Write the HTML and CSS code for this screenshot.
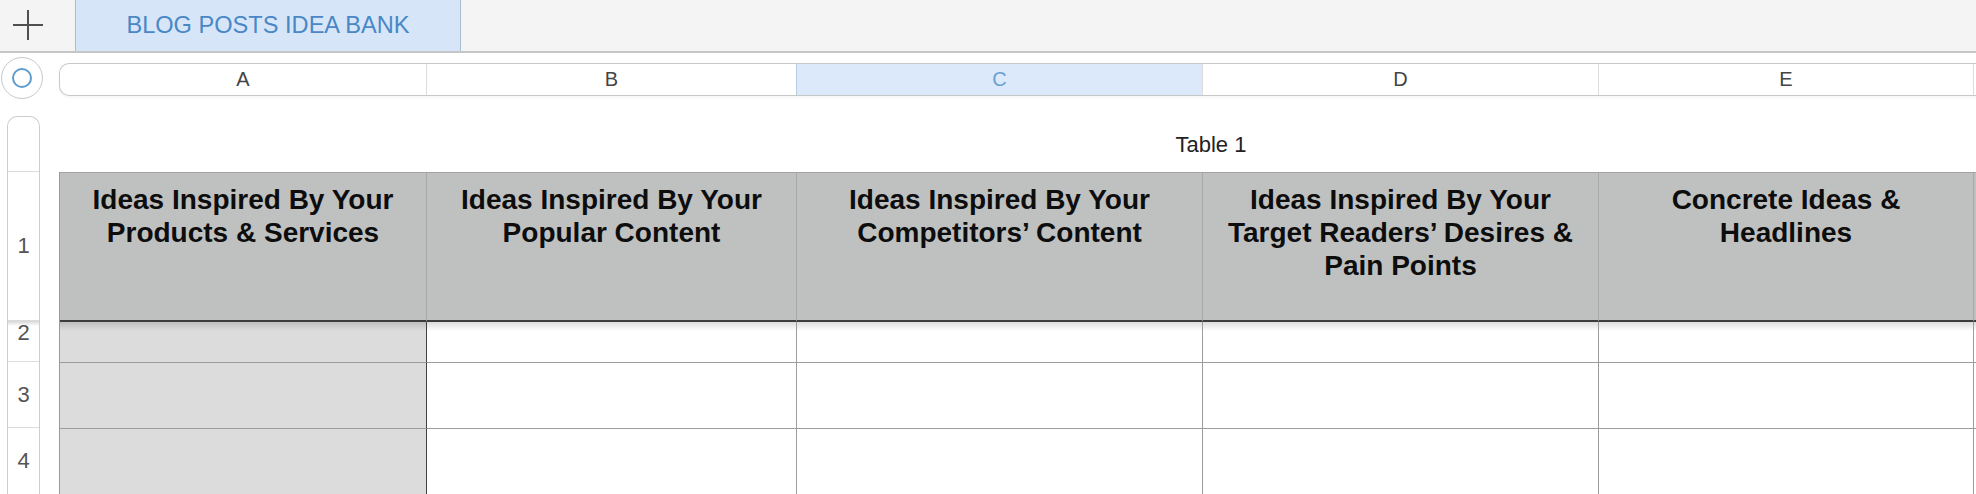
FILE: index.html
```html
<!DOCTYPE html>
<html lang="en">
<head>
<meta charset="utf-8">
<title>Blog Posts Idea Bank</title>
<link rel="stylesheet" href="styles.css">
</head>
<body>
<header class="tabbar">
  <button class="add-btn" aria-label="Add sheet">
    <svg width="32" height="32" viewBox="0 0 32 32"><path d="M16 1V31M1 16H31" stroke="#4f4f4f" stroke-width="2" fill="none"/></svg>
  </button>
  <div class="tab tab-active">BLOG POSTS IDEA BANK</div>
</header>

<div class="sheet">
  <div class="gutter">
    <div class="corner"><span class="circle-btn"><span class="circle-ring"></span></span></div>
    <div class="rowhead">
      <div class="rh rh-top"></div>
      <div class="rh rh-1">1</div>
      <div class="rh rh-2">2</div>
      <div class="rh rh-3">3</div>
      <div class="rh rh-4">4</div>
    </div>
  </div>

  <div class="content">
    <div class="colbar">
      <div class="ch">A</div>
      <div class="ch">B</div>
      <div class="ch ch-selected">C</div>
      <div class="ch">D</div>
      <div class="ch">E</div>
      <div class="ch"></div>
    </div>
    <div class="table-title">Table 1</div>
    <div class="table">
      <div class="hc">Ideas Inspired By Your Products &amp; Services</div>
      <div class="hc">Ideas Inspired By Your Popular Content</div>
      <div class="hc">Ideas Inspired By Your Competitors’ Content</div>
      <div class="hc">Ideas Inspired By Your Target Readers’ Desires &amp; Pain Points</div>
      <div class="hc">Concrete Ideas &amp; Headlines</div>
      <div class="hc"></div>

      <div class="bc r2 col-a"></div>
      <div class="bc r2"></div>
      <div class="bc r2"></div>
      <div class="bc r2"></div>
      <div class="bc r2"></div>
      <div class="bc r2"></div>

      <div class="bc r3 col-a"></div>
      <div class="bc r3"></div>
      <div class="bc r3"></div>
      <div class="bc r3"></div>
      <div class="bc r3"></div>
      <div class="bc r3"></div>

      <div class="bc r4 col-a"></div>
      <div class="bc r4"></div>
      <div class="bc r4"></div>
      <div class="bc r4"></div>
      <div class="bc r4"></div>
      <div class="bc r4"></div>
    </div>
  </div>
</div>
</body>
</html>
```

FILE: styles.css
```css
* { box-sizing: border-box; }

html, body {
  margin: 0;
  padding: 0;
}

body {
  width: 1976px;
  height: 494px;
  overflow: hidden;
  background: #ffffff;
  font-family: "Liberation Sans", Arial, Helvetica, sans-serif;
  color: #222;
}

/* ---------- Tab bar ---------- */
.tabbar {
  display: flex;
  height: 53px;
  background: #f4f4f4;
  border-bottom: 2px solid #c6c6c6;
}

.add-btn {
  width: 75px;
  height: 51px;
  padding: 0 0 0 12px;
  margin: 0;
  border: none;
  background: transparent;
  display: flex;
  align-items: center;
  justify-content: flex-start;
}

.add-btn svg { display: block; margin-top: -2px; }

.tab {
  width: 386px;
  height: 51px;
  display: flex;
  align-items: center;
  justify-content: center;
  font-size: 23.6px;
}

.tab-active {
  background: #d6e6f8;
  border-left: 1px solid #a9bdd2;
  border-right: 1px solid #a9bdd2;
  color: #4a87c6;
}

/* ---------- Sheet ---------- */
.sheet {
  display: flex;
  margin-top: 10px;
  --cols: 367px 370px 406px 396px 375px 390px;
}

.gutter {
  width: 59px;
  flex-shrink: 0;
  display: flex;
  flex-direction: column;
}

.corner {
  height: 33px;
  display: flex;
  align-items: flex-start;
}

.circle-btn {
  width: 42px;
  height: 42px;
  margin: -6px 0 0 1px;
  border-radius: 50%;
  border: 1px solid #c9c9c9;
  background: #fff;
  display: flex;
  align-items: center;
  justify-content: center;
}

.circle-ring {
  width: 20px;
  height: 20px;
  border-radius: 50%;
  border: 2px solid #5e9ccd;
}

.rowhead {
  margin: 20px 0 0 7px;
  width: 33px;
  border: 1px solid #cdcdcd;
  border-bottom: none;
  border-radius: 10px 10px 0 0;
  display: flex;
  flex-direction: column;
}

.rh {
  display: flex;
  align-items: center;
  justify-content: center;
  font-size: 22px;
  color: #555;
  border-bottom: 1px solid #dcdcdc;
}

.rh-top { height: 55px; }
.rh-1 { height: 149px; }
.rh-2 {
  height: 41px;
  align-items: flex-start;
  line-height: 24px;
  background: linear-gradient(#d6d6d6, #ffffff 5px);
}
.rh-3 { height: 66px; }
.rh-4 { height: 66px; border-bottom: none; }

.content {
  width: 2304px;
  flex-shrink: 0;
  display: flex;
  flex-direction: column;
}

/* ---------- Column header bar ---------- */
.colbar {
  height: 33px;
  display: grid;
  grid-template-columns: var(--cols);
  border: 1px solid #c8c8c8;
  border-right: none;
  border-radius: 10px 0 0 10px;
  background: #fff;
  overflow: hidden;
  box-shadow: 0 2px 3px rgba(0, 0, 0, 0.04);
}

.ch {
  display: flex;
  align-items: center;
  justify-content: center;
  font-size: 20px;
  color: #444;
  border-right: 1px solid #dddddd;
}

.ch-selected {
  background: #dbe9fa;
  color: #6a9fd2;
  border-left: 1px solid #b9cde2;
  margin-left: -1px;
}

/* ---------- Table ---------- */
.table-title {
  height: 76px;
  display: flex;
  align-items: flex-end;
  justify-content: center;
  padding-bottom: 15px;
  font-size: 22px;
  line-height: 24px;
  color: #222;
}

.table {
  display: grid;
  grid-template-columns: var(--cols);
  border-top: 1px solid #a3a3a3;
  border-left: 1px solid #9a9a9a;
}

.hc {
  height: 149px;
  background: #bfc1c0;
  border-right: 1px solid #a8aaa9;
  border-bottom: 2px solid #3c3c3c;
  padding: 10px 10px 0;
  text-align: center;
  font-weight: bold;
  font-size: 28px;
  line-height: 33px;
  color: #0d0d0d;
}

.bc {
  background: #ffffff;
  border-right: 1px solid #9c9c9c;
  border-bottom: 1px solid #9c9c9c;
}

.col-a {
  background: #dcdcdc;
  border-right-color: #404040;
}

.r2 {
  height: 41px;
  background-image: linear-gradient(rgba(0, 0, 0, 0.14), rgba(0, 0, 0, 0) 9px);
}
.r3 { height: 66px; }
.r4 { height: 66px; }
```
